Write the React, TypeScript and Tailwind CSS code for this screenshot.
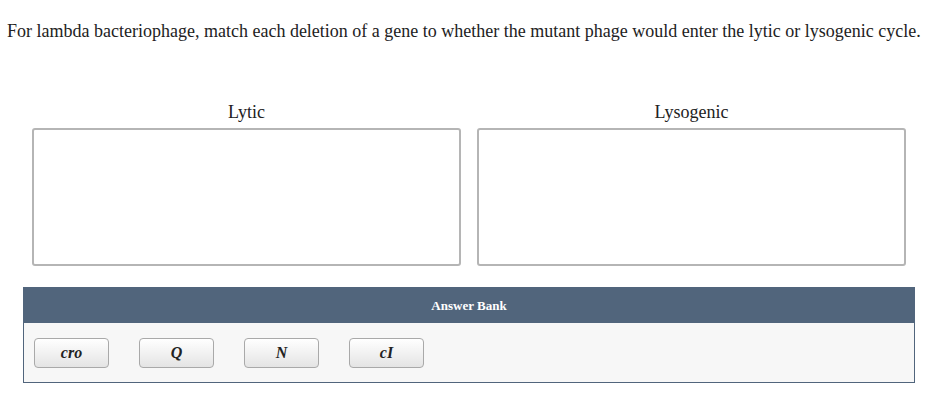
import React from "react";

const chips = ["cro", "Q", "N", "cI"];

export default function App() {
  return (
    <div
      className="w-[929px] h-[417px] bg-white text-[#222]"
      style={{ fontFamily: '"Liberation Serif", "Times New Roman", serif' }}
    >
      <div className="pl-[7px] pt-[21px] text-[18px] leading-[20px] text-[#222] whitespace-nowrap">
        For lambda bacteriophage, match each deletion of a gene to whether the mutant phage would enter the lytic or lysogenic cycle.
      </div>

      <div className="mt-[61px] ml-[32px] w-[874px] grid grid-cols-2 gap-x-[16px]">
        {["Lytic", "Lysogenic"].map((l) => (
          <div key={l} className="flex flex-col">
            <div className="text-center text-[18px] leading-[20px] h-[26px]">{l}</div>
            <div className="h-[138px] border-2 border-[#b5b5b5] rounded-[3px] bg-white" />
          </div>
        ))}
      </div>

      <div className="mt-[21px] ml-[23px] w-[892px] border border-[#51657c]">
        <div className="h-[35px] bg-[#51657c] flex items-center justify-center text-white font-bold text-[13px]">
          Answer Bank
        </div>
        <div className="bg-[#f7f7f7] h-[59px] flex items-start gap-[30px] pl-[10px] pt-[15px]">
          {chips.map((c) => (
            <div
              key={c}
              className="w-[75px] h-[30px] rounded-[4px] border border-[#a9a9a9] bg-gradient-to-b from-white to-[#e4e4e4] flex items-center justify-center italic font-bold text-[16px] text-[#222]"
            >
              {c}
            </div>
          ))}
        </div>
      </div>
    </div>
  );
}
